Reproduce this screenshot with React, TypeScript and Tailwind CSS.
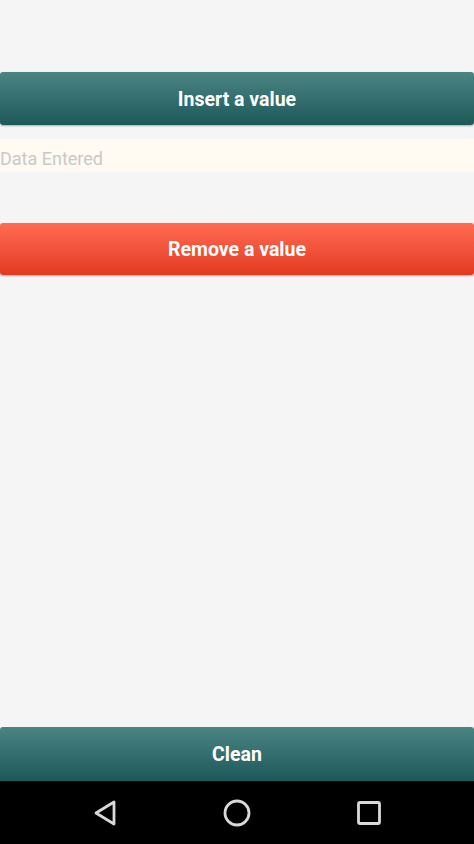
import React from "react";

function NavBar() {
  return (
    <div className="h-[63px] bg-black flex items-center justify-center">
      <div className="w-[132px] flex justify-center">
        <svg width="28" height="28" viewBox="0 0 28 28">
          <path d="M23 3 L23 25 L5 14 Z" fill="none" stroke="#d9d9d9" strokeWidth="2.8" strokeLinejoin="round" />
        </svg>
      </div>
      <div className="w-[132px] flex justify-center">
        <svg width="30" height="30" viewBox="0 0 30 30">
          <circle cx="15" cy="15" r="12" fill="none" stroke="#d9d9d9" strokeWidth="2.8" />
        </svg>
      </div>
      <div className="w-[132px] flex justify-center">
        <svg width="28" height="28" viewBox="0 0 28 28">
          <rect x="3.5" y="3.5" width="21" height="21" rx="1.5" fill="none" stroke="#d9d9d9" strokeWidth="2.8" />
        </svg>
      </div>
    </div>
  );
}

export default function App() {
  return (
    <div
      className="w-[474px] h-[844px] bg-[#f5f5f5] flex flex-col overflow-hidden"
      style={{ fontFamily: "Roboto, 'Liberation Sans', sans-serif" }}
    >
      <div className="flex-1 flex flex-col pt-[72px]">
        <button className="h-[53px] w-full rounded-[3px] bg-gradient-to-b from-[#4a8584] to-[#1d5859] text-white font-bold text-[19.5px] pt-[3px] shadow-[0_1px_2px_rgba(0,0,0,0.3)]">
          Insert a value
        </button>
        <div className="mt-[14px] h-[33px] bg-[#fffaf2] flex items-center pt-[5px] text-[18px] text-[#c9c9c9]">
          Data Entered
        </div>
        <button className="mt-[51px] h-[52px] w-full rounded-[3px] bg-gradient-to-b from-[#ff6b52] to-[#e2391f] text-white font-bold text-[19.5px] pt-[2px] shadow-[0_1px_2px_rgba(0,0,0,0.3)]">
          Remove a value
        </button>
      </div>
      <button className="h-[54px] w-full rounded-t-[3px] bg-gradient-to-b from-[#4a8584] to-[#1d5859] text-white font-bold text-[19.5px] pt-[2px]">
        Clean
      </button>
      <NavBar />
    </div>
  );
}
